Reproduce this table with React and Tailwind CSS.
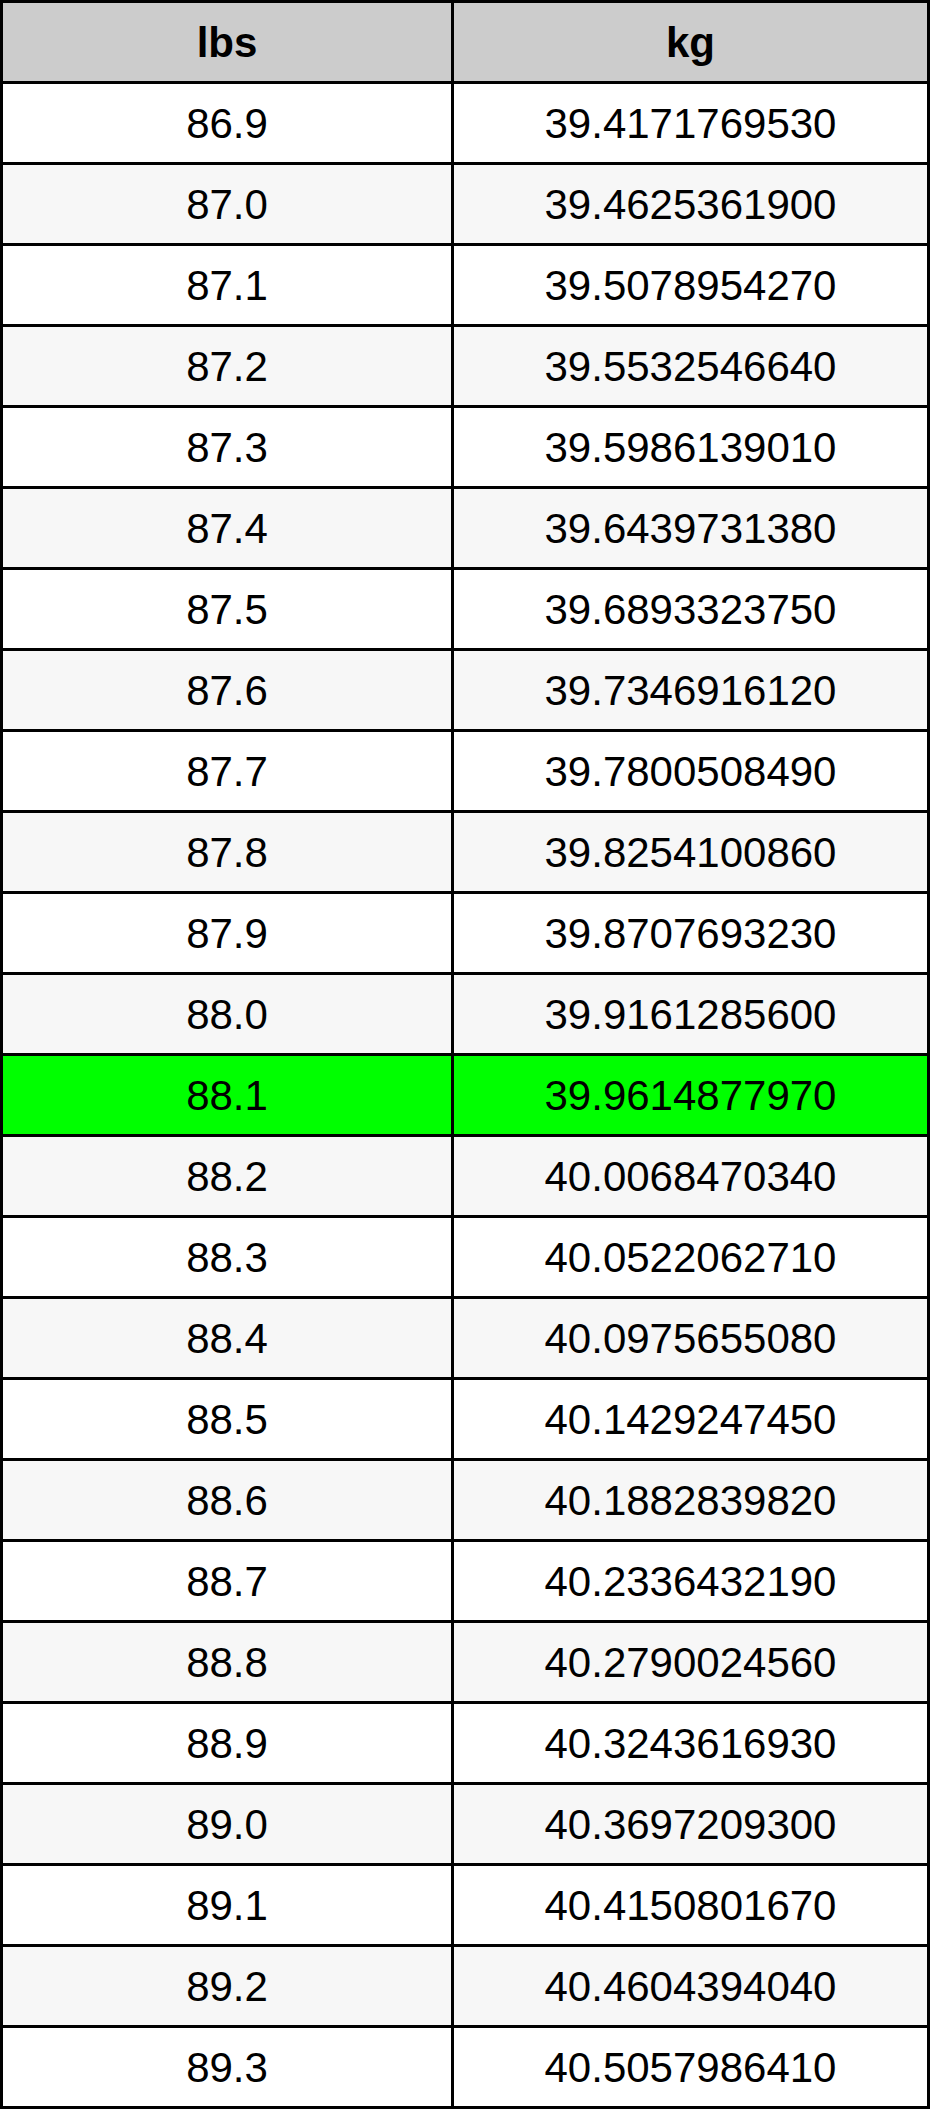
import React from "react";

const rows = [
  ["86.9", "39.4171769530"],
  ["87.0", "39.4625361900"],
  ["87.1", "39.5078954270"],
  ["87.2", "39.5532546640"],
  ["87.3", "39.5986139010"],
  ["87.4", "39.6439731380"],
  ["87.5", "39.6893323750"],
  ["87.6", "39.7346916120"],
  ["87.7", "39.7800508490"],
  ["87.8", "39.8254100860"],
  ["87.9", "39.8707693230"],
  ["88.0", "39.9161285600"],
  ["88.1", "39.9614877970"],
  ["88.2", "40.0068470340"],
  ["88.3", "40.0522062710"],
  ["88.4", "40.0975655080"],
  ["88.5", "40.1429247450"],
  ["88.6", "40.1882839820"],
  ["88.7", "40.2336432190"],
  ["88.8", "40.2790024560"],
  ["88.9", "40.3243616930"],
  ["89.0", "40.3697209300"],
  ["89.1", "40.4150801670"],
  ["89.2", "40.4604394040"],
  ["89.3", "40.5057986410"],
];

const App = () => {
  return (
    <div className="bg-white w-[930px] min-h-[2115px] font-['Liberation_Sans',Arial,sans-serif] text-black">
      <div className="w-[930px] border-[3px] border-black">
        {/* Header */}
        <div className="flex h-[78px] bg-[#cccccc] text-[42px] font-bold">
          <div className="w-[448px] flex items-center justify-center">lbs</div>
          <div className="flex-1 border-l-[3px] border-black flex items-center justify-center">kg</div>
        </div>

        {/* Rows */}
        {rows.map(([lbs, kg], i) => {
          const bg =
            lbs === "88.1"
              ? "bg-[#00ff00]"
              : i % 2 === 1
              ? "bg-[#f7f7f7]"
              : "bg-white";
          return (
            <div
              key={lbs}
              className={`flex h-[81px] border-t-[3px] border-black text-[42px] ${bg}`}
            >
              <div className="w-[448px] flex items-center justify-center">{lbs}</div>
              <div className="flex-1 border-l-[3px] border-black flex items-center justify-center">{kg}</div>
            </div>
          );
        })}
      </div>
    </div>
  );
};

export default App;
